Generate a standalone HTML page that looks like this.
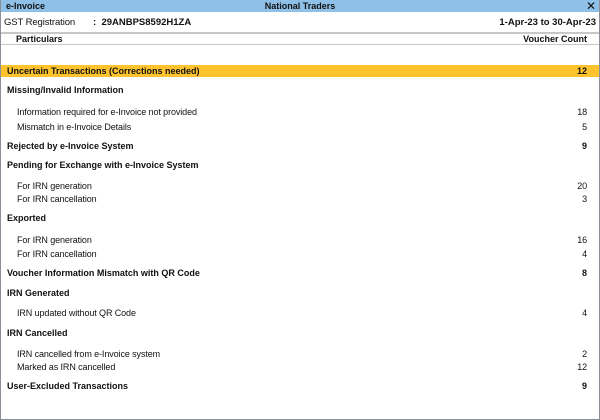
<!DOCTYPE html>
<html><head><meta charset="utf-8"><style>
*{margin:0;padding:0;box-sizing:border-box}
body{width:600px;height:420px;background:#fff;font-family:"Liberation Sans",Arial,sans-serif;font-size:9px;color:#111;position:relative;overflow:hidden}
.frame{position:absolute;left:0;top:0;width:600px;height:420px;border:1px solid #8a9097;border-top:none}
.title{position:absolute;left:0;top:0;width:600px;height:12px;background:#8fc0e8;font-weight:bold;line-height:12px}
.t{position:absolute;white-space:nowrap;line-height:10px;letter-spacing:-0.1px}
.b{font-weight:bold;letter-spacing:0}
.r{right:13px;text-align:right}
.line{position:absolute;left:1px;width:598px;height:1px;background:#c8c8c8}
.yellow{position:absolute;left:1px;top:65px;width:598px;height:12px;background:#ffc32e}
</style></head><body>
<div class="title"><span style="position:absolute;left:6px">e-Invoice</span><span style="position:absolute;left:0;width:600px;text-align:center">National Traders</span><span style="position:absolute;right:4px;font-size:12px;font-weight:normal">✕</span></div>
<div class="frame"></div>
<div class="t" style="left:4px;top:18px;font-size:9.5px">GST Registration</div>
<div class="t b" style="left:93px;top:18px;font-size:9.5px">:&nbsp; 29ANBPS8592H1ZA</div>
<div class="t b" style="right:4px;top:18px;font-size:9.5px">1-Apr-23 to 30-Apr-23</div>
<div class="line" style="top:32px;height:2px"></div>
<div class="t b" style="left:16px;top:34px">Particulars</div>
<div class="t b" style="right:13px;top:34px">Voucher Count</div>
<div class="line" style="top:44px"></div>
<div class="yellow"></div>
<div class="t b" style="left:7px;top:66px">Uncertain Transactions (Corrections needed)</div><div class="t b r" style="top:66px">12</div>
<div class="t b" style="left:7px;top:85px">Missing/Invalid Information</div>
<div class="t" style="left:17px;top:107px">Information required for e-Invoice not provided</div><div class="t r" style="top:107px">18</div>
<div class="t" style="left:17px;top:122px">Mismatch in e-Invoice Details</div><div class="t r" style="top:122px">5</div>
<div class="t b" style="left:7px;top:141px">Rejected by e-Invoice System</div><div class="t b r" style="top:141px">9</div>
<div class="t b" style="left:7px;top:160px">Pending for Exchange with e-Invoice System</div>
<div class="t" style="left:17px;top:181px">For IRN generation</div><div class="t r" style="top:181px">20</div>
<div class="t" style="left:17px;top:194px">For IRN cancellation</div><div class="t r" style="top:194px">3</div>
<div class="t b" style="left:7px;top:213px">Exported</div>
<div class="t" style="left:17px;top:235px">For IRN generation</div><div class="t r" style="top:235px">16</div>
<div class="t" style="left:17px;top:249px">For IRN cancellation</div><div class="t r" style="top:249px">4</div>
<div class="t b" style="left:7px;top:268px">Voucher Information Mismatch with QR Code</div><div class="t b r" style="top:268px">8</div>
<div class="t b" style="left:7px;top:288px">IRN Generated</div>
<div class="t" style="left:17px;top:308px">IRN updated without QR Code</div><div class="t r" style="top:308px">4</div>
<div class="t b" style="left:7px;top:328px">IRN Cancelled</div>
<div class="t" style="left:17px;top:349px">IRN cancelled from e-Invoice system</div><div class="t r" style="top:349px">2</div>
<div class="t" style="left:17px;top:362px">Marked as IRN cancelled</div><div class="t r" style="top:362px">12</div>
<div class="t b" style="left:7px;top:381px">User-Excluded Transactions</div><div class="t b r" style="top:381px">9</div>
</body></html>
